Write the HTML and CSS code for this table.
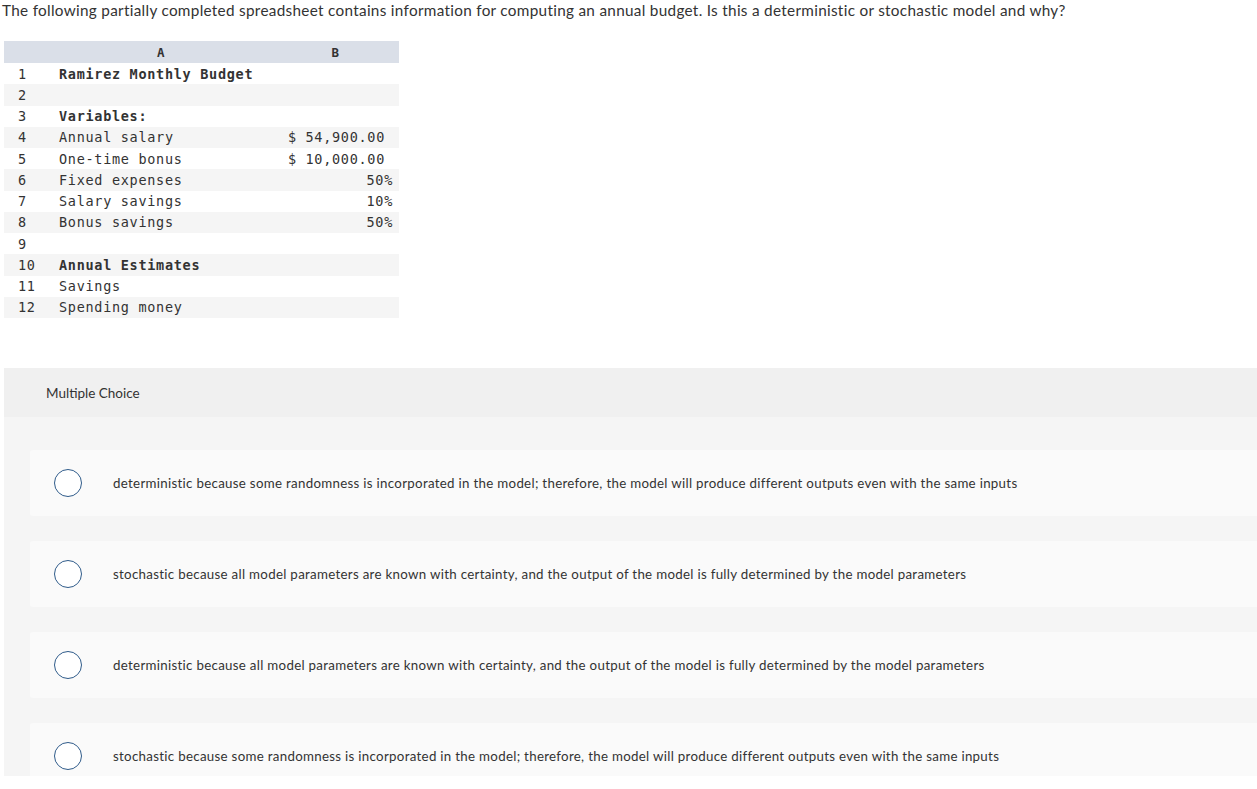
FILE: index.html
```html
<!DOCTYPE html>
<html>
<head>
<meta charset="utf-8">
<link rel="stylesheet" href="styles.css">
</head>
<body>
<p class="question">The following partially completed spreadsheet contains information for computing an annual budget. Is this a deterministic or stochastic model and why?</p>
<table class="sheet">
  <thead>
    <tr><th class="num"></th><th class="ca">A</th><th class="cb">B</th></tr>
  </thead>
  <tbody>
    <tr><td class="num">1</td><td class="b">Ramirez Monthly Budget</td><td></td></tr>
    <tr><td class="num">2</td><td></td><td></td></tr>
    <tr><td class="num">3</td><td class="b">Variables:</td><td></td></tr>
    <tr><td class="num">4</td><td>Annual salary</td><td class="r cur">$ 54,900.00</td></tr>
    <tr><td class="num">5</td><td>One-time bonus</td><td class="r cur">$ 10,000.00</td></tr>
    <tr><td class="num">6</td><td>Fixed expenses</td><td class="r">50%</td></tr>
    <tr><td class="num">7</td><td>Salary savings</td><td class="r">10%</td></tr>
    <tr><td class="num">8</td><td>Bonus savings</td><td class="r">50%</td></tr>
    <tr><td class="num">9</td><td></td><td></td></tr>
    <tr><td class="num">10</td><td class="b">Annual Estimates</td><td></td></tr>
    <tr><td class="num">11</td><td>Savings</td><td></td></tr>
    <tr><td class="num">12</td><td>Spending money</td><td></td></tr>
  </tbody>
</table>
<section class="mc">
  <div class="mc-head">Multiple Choice</div>
  <div class="mc-body">
    <div class="opt"><span class="radio"></span><span class="opt-text">deterministic because some randomness is incorporated in the model; therefore, the model will produce different outputs even with the same inputs</span></div>
    <div class="opt"><span class="radio"></span><span class="opt-text">stochastic because all model parameters are known with certainty, and the output of the model is fully determined by the model parameters</span></div>
    <div class="opt"><span class="radio"></span><span class="opt-text">deterministic because all model parameters are known with certainty, and the output of the model is fully determined by the model parameters</span></div>
    <div class="opt"><span class="radio"></span><span class="opt-text">stochastic because some randomness is incorporated in the model; therefore, the model will produce different outputs even with the same inputs</span></div>
  </div>
</section>
</body>
</html>
```
FILE: styles.css
```css
html, body {
  margin: 0;
  padding: 0;
  background: #ffffff;
  overflow: hidden;
}
body {
  font-family: Lato, "Open Sans", sans-serif;
  color: #333333;
  height: 789px;
}
.question {
  margin: 0;
  padding: 1px 0 0 2px;
  font-size: 15.3px;
  line-height: 18px;
  letter-spacing: 0.3px;
  color: #333333;
}
.sheet {
  margin: 22px 0 0 4px;
  border-collapse: collapse;
  font-family: "DejaVu Sans Mono", "Liberation Mono", monospace;
  font-size: 13.5px;
  letter-spacing: 0.7px;
  color: #333;
}
.sheet th {
  background: #dadfe8;
  height: 22px;
  padding: 0;
  font-weight: bold;
  font-size: 12.5px;
  text-align: center;
}
.sheet .num { width: 46px; padding: 0 0 0 14px; box-sizing: border-box; text-align: left; }
.sheet .ca { width: 222px; }
.sheet .cb { width: 127px; }
.sheet td {
  height: 21.25px;
  padding: 0 0 0 9px;
  white-space: nowrap;
}
.sheet td.num { padding-left: 14px; }
.sheet tbody tr:nth-child(even) td { background: #f5f5f5; }
.sheet td.b { font-weight: bold; }
.sheet td.r { text-align: right; padding: 0 6px 0 0; }
.sheet td.cur { padding-right: 14px; }
.mc {
  margin: 50px 0 0 4px;
  background: #f5f5f5;
  height: 408px;
  overflow: hidden;
}
.mc-head {
  background: #f0f0f0;
  height: 49px;
  padding-left: 42px;
  display: flex;
  align-items: center;
  font-size: 13.5px;
  color: #333;
}
.mc-body {
  padding: 33px 0 0 26px;
  display: flex;
  flex-direction: column;
  gap: 25px;
}
.opt {
  background: #fafafa;
  height: 66px;
  flex: none;
  display: flex;
  align-items: center;
  border-radius: 3px 0 0 3px;
}
.radio {
  box-sizing: border-box;
  width: 28px;
  height: 28px;
  border: 1.5px solid #2f5b8a;
  border-radius: 50%;
  background: #fff;
  margin-left: 24px;
  flex: none;
}
.opt-text {
  margin-left: 31px;
  font-size: 13.3px;
  letter-spacing: 0.3px;
  color: #333;
}
```
